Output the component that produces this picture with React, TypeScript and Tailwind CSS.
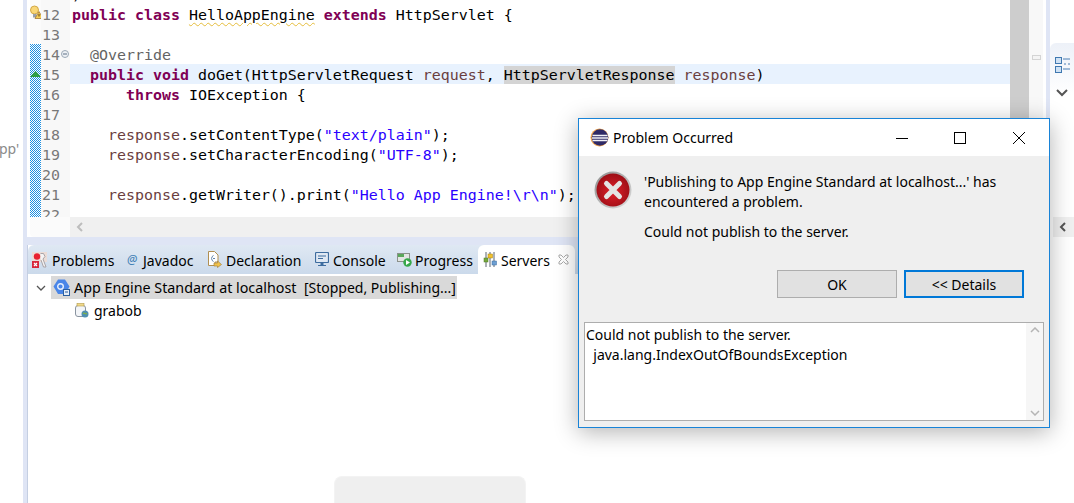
const mono = "font-['DejaVu_Sans_Mono',monospace] text-[14.95px]";
const ui = "font-['Noto_Sans',sans-serif]";

const kw = 'font-bold text-[#7f0055]';
const plain = 'text-[#000000]';
const ann = 'text-[#646464]';
const param = 'text-[#6a3e3e]';
const str = 'text-[#2a00ff]';

type Tok = [string, string];

const lines: { n: string; toks: Tok[]; dots?: boolean; active?: boolean }[] = [
  { n: '', toks: [[')', plain]] },
  {
    n: '12',
    toks: [
      ['public class ', kw],
      ['HelloAppEngine', 'text-black underline decoration-wavy decoration-[#e5bd3c] decoration-1 underline-offset-2'],
      [' ', plain],
      ['extends ', kw],
      ['HttpServlet {', plain],
    ],
  },
  { n: '13', toks: [] },
  { n: '14', dots: true, toks: [['  @Override', ann]] },
  {
    n: '15',
    dots: true,
    active: true,
    toks: [
      ['  public void ', kw],
      ['doGet(HttpServletRequest ', plain],
      ['request', param],
      [', ', plain],
      ['HttpServletResponse', 'text-black bg-[#d4d4d4]'],
      [' ', plain],
      ['response', param],
      [')', plain],
    ],
  },
  { n: '16', dots: true, toks: [['      throws ', kw], ['IOException {', plain]] },
  { n: '17', dots: true, toks: [] },
  {
    n: '18',
    dots: true,
    toks: [
      ['    ', plain],
      ['response', param],
      ['.setContentType(', plain],
      ['"text/plain"', str],
      [');', plain],
    ],
  },
  {
    n: '19',
    dots: true,
    toks: [
      ['    ', plain],
      ['response', param],
      ['.setCharacterEncoding(', plain],
      ['"UTF-8"', str],
      [');', plain],
    ],
  },
  { n: '20', dots: true, toks: [] },
  {
    n: '21',
    dots: true,
    toks: [
      ['    ', plain],
      ['response', param],
      ['.getWriter().print(', plain],
      ['"Hello App Engine!\\r\\n"', str],
      [');', plain],
    ],
  },
  { n: '22', dots: true, toks: [] },
];

// quick diff ruler checker, 1px squares
function Dots({ id }: { id: string }) {
  return (
    <svg width="11" height="20" className="absolute inset-0" shapeRendering="crispEdges">
      <defs>
        <pattern id={id} width="2" height="2" patternUnits="userSpaceOnUse">
          <rect width="2" height="2" fill="#ffffff" />
          <rect width="1" height="1" fill="#1e8fe0" />
          <rect x="1" y="1" width="1" height="1" fill="#1e8fe0" />
        </pattern>
      </defs>
      <rect width="11" height="20" fill={`url(#${id})`} />
    </svg>
  );
}

function WarnBulb() {
  return (
    <svg width="14" height="15" viewBox="0 0 14 15" className="absolute left-0 top-[1px]">
      <circle cx="4.500" cy="5" r="4" fill="#f9d777" stroke="#d2a848" />
      <rect x="3" y="9" width="3.500" height="3.500" fill="#9aa0a8" />
      <path d="M9 6.500l4 7H5z" fill="#f6cf56" stroke="#9a6a22" strokeWidth="0.700" />
      <path d="M9 9v2.500" stroke="#5a3a10" />
    </svg>
  );
}

function ProblemsIcon() {
  return (
    <svg width="15" height="16" viewBox="0 0 15 16">
      <rect x="0" y="0" width="15" height="10" fill="#ecdcd6" />
      <path d="M8.500 1.500h3l1.500 3-2 2.500 3 8h-2.500L9 8" fill="#f5f3f3" stroke="#a9a4a8" />
      <circle cx="5" cy="4.500" r="3.200" fill="#e8212f" />
      <rect x="0" y="9" width="7" height="7" fill="#d8283c" />
      <path d="M2 11l3 3M5 11l-3 3" stroke="#fff" strokeWidth="1.200" />
    </svg>
  );
}

function DeclarationIcon() {
  return (
    <svg width="15" height="17" viewBox="0 0 15 17">
      <path d="M1.500.5h6l3.500 3.500v7h-3v3.500h-6.500z" fill="#fff" stroke="#b08f52" />
      <path d="M6.500 4.500C5 4.500 5.500 7 4 7.500c1.500.5 1 3 2.500 3M8 7.500H6" fill="none" stroke="#5f83ad" />
      <path d="M7 12h3.500v-2l4 3.500-4 3V15H7z" fill="#f1c24a" stroke="#a8843f" strokeWidth="0.700" />
    </svg>
  );
}

function ConsoleIcon() {
  return (
    <svg width="14" height="15" viewBox="0 0 14 15">
      <rect x="0.500" y="0.500" width="13" height="10" rx="1" fill="#dfe8f3" stroke="#3d6c9e" strokeWidth="1.200" />
      <path d="M3 4h8M3 6.500h5" stroke="#3d6c9e" />
      <path d="M3 13h8v1H3zM5.500 11h3v2h-3z" fill="#3d6c9e" />
    </svg>
  );
}

function ProgressIcon() {
  return (
    <svg width="15" height="15" viewBox="0 0 15 15">
      <rect x="0.500" y="1.500" width="12" height="8" fill="#e3e6e3" stroke="#8b918b" />
      <rect x="1" y="2" width="6" height="3" fill="#5aa75a" />
      <circle cx="10.500" cy="10.500" r="4.200" fill="#37a84a" />
      <path d="M9 8l4 2.500-4 2.500z" fill="#fff" />
    </svg>
  );
}

function ServersIcon() {
  return (
    <svg width="14" height="15" viewBox="0 0 14 15">
      <path d="M3 0v15M7 0v15M11 0v15" stroke="#5b6470" />
      <rect x="1" y="6" width="4" height="4" fill="#76a83e" stroke="#4d7a22" strokeWidth="0.500" />
      <rect x="5" y="2" width="4.500" height="4" fill="#f1c12c" stroke="#a37f10" strokeWidth="0.500" />
      <rect x="9" y="9" width="4.500" height="4" fill="#6d9fd2" stroke="#3a6b9f" strokeWidth="0.500" />
    </svg>
  );
}

function AppEngineIcon() {
  return (
    <svg width="17" height="17" viewBox="0 0 17 17">
      <path d="M5 0.500h7l4.500 7-4 7.500H5L0.500 7.500z" fill="#4a86e8" />
      <circle cx="7.500" cy="7.500" r="2.800" fill="none" stroke="#e8f0fd" strokeWidth="1.400" />
      <rect x="10.500" y="10.500" width="6" height="6" fill="#e6eef8" stroke="#2c5f9e" />
      <path d="M12 13h3" stroke="#2c5f9e" />
    </svg>
  );
}

function ModuleIcon() {
  return (
    <svg width="14" height="15" viewBox="0 0 14 15">
      <rect x="0.500" y="2.500" width="10" height="11" rx="2.500" fill="#f3f5f8" stroke="#8a94a0" />
      <rect x="2" y="0.500" width="7" height="2.500" fill="#f0d98a" stroke="#b49b4a" strokeWidth="0.600" />
      <circle cx="10" cy="11" r="3.500" fill="#4f8fb0" />
      <path d="M8 10.500c1.500-1 2.500 1 4 0" stroke="#7fb04a" fill="none" strokeWidth="1.300" />
    </svg>
  );
}

function EclipseIcon() {
  return (
    <svg width="19" height="19" viewBox="0 0 19 19">
      <circle cx="9.500" cy="9.500" r="9" fill="#f0a44c" />
      <circle cx="10" cy="9.500" r="8.300" fill="#2f2a66" />
      <path d="M2.500 7.500h15M2 10h16M2.500 12.500h15" stroke="#f2f2f7" strokeWidth="1.300" />
    </svg>
  );
}

function ErrorIcon() {
  return (
    <svg width="38" height="38" viewBox="0 0 38 38">
      <defs>
        <radialGradient id="redFill" cx="50%" cy="55%" r="60%">
          <stop offset="0%" stopColor="#e0202a" />
          <stop offset="100%" stopColor="#960c14" />
        </radialGradient>
        <linearGradient id="ringFill" x1="0" y1="0" x2="1" y2="1">
          <stop offset="0%" stopColor="#8d8d8d" />
          <stop offset="100%" stopColor="#dedede" />
        </linearGradient>
      </defs>
      <circle cx="19" cy="19" r="18.500" fill="url(#ringFill)" />
      <circle cx="19" cy="19" r="16.500" fill="url(#redFill)" />
      <path d="M12.500 12.500l13 13M25.500 12.500l-13 13" stroke="#e4e4e4" strokeWidth="5" strokeLinecap="round" />
    </svg>
  );
}

function Tab({ w, slot, icon, label }: { w: string; slot: string; icon: React.ReactNode; label: string }) {
  return (
    <div className={`flex h-full shrink-0 items-center ${w}`}>
      <div className={`flex shrink-0 items-center ${slot}`}>{icon}</div>
      <span className="pt-px text-[14px] text-[#000000]">{label}</span>
    </div>
  );
}

export default function App() {
  return (
    <div className={`relative flex h-[503px] w-[1074px] overflow-hidden bg-white ${ui}`}>
      <div className="w-[23px] shrink-0 overflow-hidden pt-[138px] text-[14px] text-[#8a8a8a]">
        <span className="-ml-px block whitespace-nowrap">pp'</span>
      </div>
      <div className="w-1 shrink-0 bg-[#dfe5f5]" />

      <div className="flex w-[1023px] shrink-0 flex-col">
        {/* editor */}
        <div className="flex h-[237px] shrink-0">
          <div className="flex w-[983px] shrink-0 flex-col">
            <div className="h-[217px] overflow-hidden">
              <div className="-mt-4">
                {lines.map((l) => (
                  <div key={l.n} className={`flex h-5 whitespace-pre leading-5 ${mono}`}>
                    <div className="w-[3px] shrink-0" />
                    <div className={`relative w-[11px] shrink-0 ${l.dots ? '' : 'bg-[#fbfbfb]'}`}>
                      {l.dots && <Dots id={`dots-${l.n}`} />}
                      {l.n === '12' && <WarnBulb />}
                      {l.n === '15' && (
                        <svg width="11" height="6" viewBox="0 0 11 6" className="absolute left-0 top-[7px]">
                          <path d="M5.500 0l5.500 6H0z" fill="#2f9e44" />
                        </svg>
                      )}
                    </div>
                    <div className="relative w-[29px] shrink-0 bg-[#f8f8f8] pl-[1px] pt-px text-[#787878]">
                      {l.n}
                      {l.n === '14' && (
                        <svg width="8" height="8" viewBox="0 0 8 8" className="absolute left-[20px] top-[6px]">
                          <circle cx="4" cy="4" r="3.500" fill="#eef1f5" stroke="#9aa7b5" />
                          <path d="M2 4h4" stroke="#5c6f84" />
                        </svg>
                      )}
                    </div>
                    <div className={`flex-1 pl-[2px] pt-px ${l.active ? 'bg-[#e8f2fe]' : ''}`}>
                      {l.toks.map((t, i) => (
                        <span key={i} className={t[1]}>
                          {t[0]}
                        </span>
                      ))}
                    </div>
                  </div>
                ))}
              </div>
            </div>
            <div className="flex h-5 shrink-0">
              <div className="w-[3px] shrink-0" />
              <div className="w-10 shrink-0 rounded-bl-sm bg-[#fbfbfb]" />
              <div className="flex flex-1 items-center bg-[#f0f0f0] pl-[6px]">
                <svg width="8" height="10" viewBox="0 0 8 10">
                  <path d="M6 1L2 5l4 4" fill="none" stroke="#bdbdbd" strokeWidth="2" />
                </svg>
              </div>
            </div>
          </div>
          <div className="h-[237px] w-[19px] shrink-0 bg-[#cdcdcd]" />
          <div className="w-[14px] shrink-0 bg-[#f8f8f8] pl-[3px] pt-[55px]">
            <div className="h-[5px] w-[9px] border border-[#d4d4d4] bg-[#f4f4f4]" />
          </div>
          <div className="w-[3px] shrink-0" />
          <div className="w-1 shrink-0 bg-[#dfe5f5]" />
        </div>

        <div className="h-2 shrink-0 bg-[#dfe5f5]" />

        {/* servers panel */}
        <div className="flex flex-1 flex-col border-l border-[#c5cfe2]">
          <div className="flex h-[29px] shrink-0 rounded-tl-md bg-gradient-to-b from-[#dfe8f3] to-[#cbdaeb] pl-1">
            <Tab w="w-[95px]" slot="w-5" icon={<ProblemsIcon />} label="Problems" />
            <Tab
              w="w-[80px]"
              slot="w-4"
              icon={<span className="text-[12px] italic leading-none text-[#3f7fb5]">@</span>}
              label="Javadoc"
            />
            <Tab w="w-[108px]" slot="w-[19px]" icon={<DeclarationIcon />} label="Declaration" />
            <Tab w="w-[82px]" slot="w-[18px]" icon={<ConsoleIcon />} label="Console" />
            <Tab w="w-[81px]" slot="w-[18px]" icon={<ProgressIcon />} label="Progress" />
            <div className="flex h-full w-[97px] shrink-0 items-center rounded-t-md bg-white pl-[5px]">
              <div className="flex w-[18px] shrink-0 items-center">
                <ServersIcon />
              </div>
              <span className="pt-px text-[14px] text-[#000000]">Servers</span>
              <svg width="11" height="11" viewBox="0 0 11 11" className="ml-2">
                <path d="M1 1h2l2.500 2.500L8 1h2v2L7.500 5.500 10 8v2H8L5.500 7.500 3 10H1V8l2.500-2.500L1 3z" fill="#fff" stroke="#a9a9a9" />
              </svg>
            </div>
          </div>
          <div className="flex flex-col pt-[2px]">
            <div className="flex h-[23px] items-center">
              <div className="flex w-[23px] shrink-0 justify-end pr-[5px]">
                <svg width="10" height="6" viewBox="0 0 10 6">
                  <path d="M1 1l4 4 4-4" fill="none" stroke="#555" strokeWidth="1.300" />
                </svg>
              </div>
              <div className="flex h-full w-[406px] items-center bg-[#d9d9d9] pl-[2px]">
                <div className="w-[21px] shrink-0">
                  <AppEngineIcon />
                </div>
                <span className="whitespace-pre text-[14.3px] text-[#000000]">App Engine Standard at localhost  </span>
                <span className="whitespace-pre text-[14px] text-[#000000]">[Stopped, Publishing...]</span>
              </div>
            </div>
            <div className="flex h-[23px] items-center pl-[47px]">
              <div className="w-[19px] shrink-0">
                <ModuleIcon />
              </div>
              <span className="text-[14px] text-[#000000]">grabob</span>
            </div>
          </div>
        </div>
      </div>

      {/* right view stack */}
      <div className="flex w-6 shrink-0 flex-col pt-[43px]">
        <div className="flex h-[174px] flex-col items-center rounded-tl-md bg-gradient-to-b from-[#edf1f8] to-white to-30% pt-[14px]">
          <svg width="15" height="16" viewBox="0 0 15 16">
            <rect x="0.500" y="0.500" width="6" height="6" fill="#cfe2f5" stroke="#3f78b0" />
            <rect x="0.500" y="9.500" width="6" height="6" fill="#cfe2f5" stroke="#3f78b0" />
            <path d="M8 2h7M9 7h2M13 7h2M8 12h7" stroke="#4a7fb5" />
          </svg>
          <svg width="12" height="8" viewBox="0 0 12 8" className="mt-[16px]">
            <path d="M1 1l5 5 5-5" fill="none" stroke="#555" strokeWidth="2" />
          </svg>
        </div>
        <div className="ml-[3px] flex h-5 items-center bg-[#f0f0f0] pl-[6px]">
          <svg width="8" height="10" viewBox="0 0 8 10">
            <path d="M6 1L2 5l4 4" fill="none" stroke="#555" strokeWidth="2" />
          </svg>
        </div>
      </div>

      {/* floating toast edge */}
      <div className="absolute left-[334px] top-[476px] h-[27px] w-[192px] rounded-t-lg border border-b-0 border-[#f3f3f3] bg-[#efefef]" />

      {/* dialog */}
      <div className="absolute left-[578px] top-[118px] flex h-[310px] w-[472px] flex-col border border-[#1883d7] bg-[#efefef] text-[14px] text-[#000000] shadow-[0_4px_22px_rgba(0,0,0,0.3)]">
        <div className="flex h-[37px] shrink-0 items-center bg-white pl-[11px]">
          <EclipseIcon />
          <span className="ml-[4px]">Problem Occurred</span>
          <div className="ml-auto flex items-center">
            <svg width="12" height="12" viewBox="0 0 12 12">
              <path d="M0 6.500h12" stroke="#000" />
            </svg>
            <svg width="12" height="12" viewBox="0 0 12 12" className="ml-[46px]">
              <rect x="0.500" y="0.500" width="11" height="11" fill="none" stroke="#000" />
            </svg>
            <svg width="12" height="12" viewBox="0 0 12 12" className="ml-[47px] mr-[24px]">
              <path d="M0 0l12 12M12 0L0 12" stroke="#000" />
            </svg>
          </div>
        </div>
        <div className="flex flex-1 flex-col">
          <div className="flex pl-[15px] pt-[15px]">
            <ErrorIcon />
            <div className="ml-[12px] leading-5">
              <p className="pt-px">'Publishing to App Engine Standard at localhost...' has</p>
              <p>encountered a problem.</p>
              <p className="mt-[10px]">Could not publish to the server.</p>
            </div>
          </div>
          <div className="mt-[28px] flex justify-end gap-[7px] pr-[25px]">
            <button className="h-7 w-[120px] border border-[#adadad] bg-[#e1e1e1]">OK</button>
            <button className="h-7 w-[120px] border-2 border-[#0078d7] bg-[#e1e1e1]">{'<< Details'}</button>
          </div>
          <div className="mx-[5px] mt-[24px] flex h-[99px] border border-[#adadad] bg-white leading-5">
            <div className="flex-1 pl-px pt-[2px]">
              <p>Could not publish to the server.</p>
              <p className="whitespace-pre">  java.lang.IndexOutOfBoundsException</p>
            </div>
            <div className="flex w-[17px] flex-col items-center justify-between bg-[#f6f6f6] py-[4px]">
              <svg width="10" height="6" viewBox="0 0 10 6">
                <path d="M1 5l4-4 4 4" fill="none" stroke="#b5b5b5" strokeWidth="1.500" />
              </svg>
              <svg width="10" height="6" viewBox="0 0 10 6">
                <path d="M1 1l4 4 4-4" fill="none" stroke="#b5b5b5" strokeWidth="1.500" />
              </svg>
            </div>
          </div>
        </div>
      </div>
    </div>
  );
}
